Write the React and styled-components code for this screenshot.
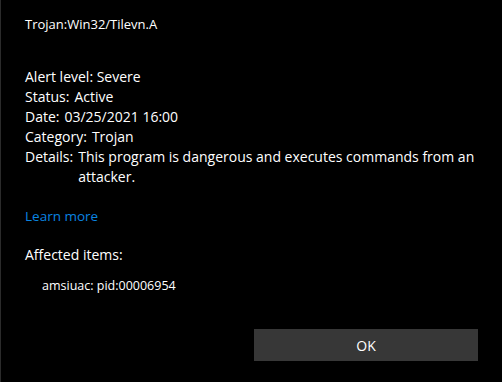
import React from 'react';
import styled, { createGlobalStyle } from 'styled-components';

const GlobalStyle = createGlobalStyle`
  html, body {
    margin: 0;
    background: #000;
  }
  body {
    font-family: "Open Sans", "Noto Sans", sans-serif;
  }
`;

const Panel = styled.div`
  width: 502px;
  height: 382px;
  box-sizing: border-box;
  background: #000;
  border-left: 1px solid #2b2b2b;
  color: #fff;
  padding: 15px 24px 0 24px;
  display: flex;
  flex-direction: column;
`;

const Title = styled.div`
  font-size: 13px;
  line-height: 18px;
  margin-bottom: 34px;
`;

const Lines = styled.div`
  display: flex;
  flex-direction: column;
  font-size: 14px;
  line-height: 20px;
`;

const Row = styled.div`
  display: flex;
  gap: 5px;
`;

const Label = styled.span`
  flex: none;
`;

const LinkText = styled.a`
  color: #0a84e0;
  font-size: 13.5px;
  line-height: 20px;
  margin-top: 19px;
  text-decoration: none;
  align-self: flex-start;
`;

const SectionHead = styled.div`
  font-size: 14px;
  line-height: 20px;
  margin-top: 19px;
`;

const Item = styled.div`
  font-size: 12.5px;
  line-height: 18px;
  margin: 12px 0 0 17px;
`;

const Footer = styled.div`
  display: flex;
  justify-content: flex-end;
  margin-top: auto;
  padding-bottom: 21px;
`;

const Button = styled.button`
  width: 224px;
  height: 32px;
  background: #373737;
  border: none;
  color: #fff;
  font-family: inherit;
  font-size: 14px;
`;

const details = [
  ['Status:', 'Active'],
  ['Date:', '03/25/2021 16:00'],
  ['Category:', 'Trojan'],
  ['Details:', 'This program is dangerous and executes commands from an attacker.'],
];

export default function App() {
  return (
    <>
      <GlobalStyle />
      <Panel>
        <Title>Trojan:Win32/Tilevn.A</Title>
        <Lines>
          <div>Alert level: Severe</div>
          {details.map(([k, v]) => (
            <Row key={k}>
              <Label>{k}</Label>
              <span>{v}</span>
            </Row>
          ))}
        </Lines>
        <LinkText href="#">Learn more</LinkText>
        <SectionHead>Affected items:</SectionHead>
        <Item>amsiuac: pid:00006954</Item>
        <Footer>
          <Button>OK</Button>
        </Footer>
      </Panel>
    </>
  );
}
